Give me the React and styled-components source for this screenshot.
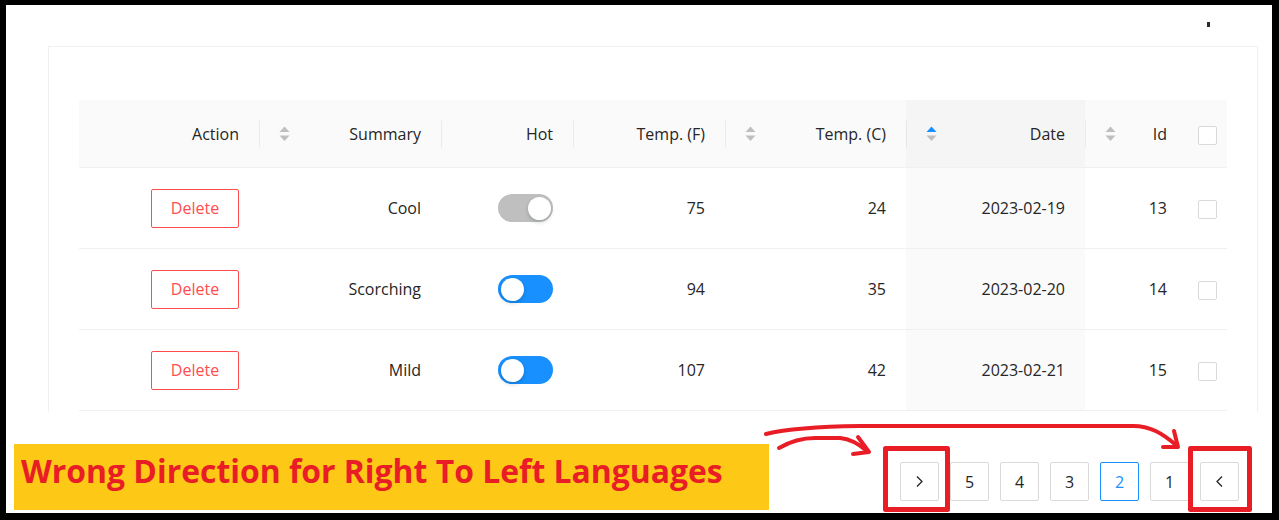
import React from 'react';
import styled, {createGlobalStyle} from 'styled-components';

const GlobalStyle = createGlobalStyle`
  html, body {
    margin: 0;
    padding: 0;
    background: #000;
  }
  body {
    font-family: "Open Sans", "Noto Sans", sans-serif;
    color: #262626;
  }
  * {
    box-sizing: border-box;
  }
`;

const Page = styled.div`
  position: relative;
  width: 1279px;
  height: 520px;
  padding: 5px 7px 7px 6px;
  background: #000;
`;

const Screen = styled.div`
  height: 100%;
  background: #fff;
  display: flex;
  flex-direction: column;
  overflow: hidden;
`;

const TopBar = styled.div`
  height: 41px;
  flex: none;
  display: flex;
  justify-content: flex-end;
  padding: 17px 62px 0 0;
`;

const Tick = styled.span`
  width: 3px;
  height: 5px;
  background: #2b2b2b;
`;

const Card = styled.div`
  flex: none;
  margin-left: 42px;
  width: 1210px;
  border: 1px solid #f0f0f0;
  border-bottom: none;
  padding: 53px 30px 1px 30px;
`;

const Table = styled.table`
  width: 1148px;
  direction: rtl;
  table-layout: fixed;
  border-collapse: separate;
  border-spacing: 0;
  font-size: 16px;
`;

const Th = styled.th`
  position: relative;
  height: 68px;
  padding: ${p => (p.$center ? '0' : '0 20px')};
  background: ${p => (p.$sorted ? '#f5f5f5' : '#fafafa')};
  border-bottom: 1px solid #f0f0f0;
  font-weight: 400;
  color: #262626;
  text-align: ${p => (p.$center ? 'center' : 'right')};
  vertical-align: middle;

  ${p =>
    p.$sep &&
    `
    &::before {
      content: '';
      position: absolute;
      left: 0;
      top: 50%;
      width: 1px;
      height: 27px;
      transform: translateY(-50%);
      background: rgba(0, 0, 0, 0.06);
    }
  `}
`;

const Td = styled.td`
  height: 81px;
  padding: ${p => (p.$center ? '0' : '0 20px')};
  background: ${p => (p.$sorted ? '#fafafa' : '#fff')};
  border-bottom: 1px solid #f0f0f0;
  text-align: ${p => (p.$center ? 'center' : 'right')};
  vertical-align: middle;
  color: #262626;
  line-height: 1.5;
`;

const HeadInner = styled.div`
  display: flex;
  align-items: center;
`;

const HeadTitle = styled.span`
  flex: 1;
  text-align: right;
`;

const SorterIcon = styled.svg`
  display: block;
  width: 11px;
  height: 16px;
`;

const Checkbox = styled.span`
  display: inline-block;
  width: 19px;
  height: 19px;
  border: 1px solid #d9d9d9;
  border-radius: 2px;
  background: #fff;
  vertical-align: middle;
`;

const SwitchTrack = styled.span`
  position: relative;
  display: inline-block;
  width: 55px;
  height: 28px;
  border-radius: 14px;
  background: ${p => (p.$on ? '#1890ff' : '#bfbfbf')};
  vertical-align: middle;
`;

const SwitchHandle = styled.span`
  position: absolute;
  top: 2.5px;
  ${p => (p.$on ? 'left: 2.5px;' : 'right: 2.5px;')}
  width: 23px;
  height: 23px;
  border-radius: 50%;
  background: #fff;
  box-shadow: 0 2px 4px rgba(0, 35, 11, 0.2);
`;

const DeleteButton = styled.button`
  width: 88px;
  height: 39px;
  padding: 0;
  border: 1px solid #ff4d4f;
  border-radius: 2px;
  background: #fff;
  color: #ff4d4f;
  font-family: inherit;
  font-size: 16px;
  vertical-align: middle;
`;

const Footer = styled.div`
  flex: 1;
  display: flex;
  align-items: flex-start;
`;

const Banner = styled.div`
  margin: 32px 0 0 8px;
  width: 755px;
  height: 66px;
  padding: 5px 0 0 7px;
  background: #fec817;
  color: #e81d25;
  font-family: "Open Sans", "Noto Sans", sans-serif;
  font-weight: 700;
  font-size: 31.9px;
  line-height: 44px;
  white-space: nowrap;
`;

const Pagination = styled.ul`
  margin: 50px 33px 0 auto;
  padding: 0;
  list-style: none;
  display: flex;
  direction: rtl;
  gap: 11px;
`;

const PageItem = styled.li`
  width: 39px;
  height: 39px;
  display: flex;
  align-items: center;
  justify-content: center;
  border: 1px solid ${p => (p.$active ? '#1890ff' : '#d9d9d9')};
  border-radius: 2px;
  background: #fff;
  color: ${p => (p.$active ? '#1890ff' : '#262626')};
  font-size: 16px;
`;

const Chevron = styled.svg`
  width: 9px;
  height: 13px;
`;

const Annotations = styled.svg`
  position: absolute;
  top: 0;
  left: 0;
  width: 1279px;
  height: 520px;
  pointer-events: none;
`;

const rows = [
  {id: 13, date: '2023-02-19', c: 24, f: 75, hot: false, summary: 'Cool'},
  {id: 14, date: '2023-02-20', c: 35, f: 94, hot: true, summary: 'Scorching'},
  {id: 15, date: '2023-02-21', c: 42, f: 107, hot: true, summary: 'Mild'},
];

const Sorter = ({up}) => (
  <SorterIcon viewBox="0 0 11 16">
    <polygon points="0.5,6 5.5,0.5 10.5,6" fill={up ? '#1890ff' : '#bfbfbf'} />
    <polygon points="0.5,9.5 5.5,15 10.5,9.5" fill="#bfbfbf" />
  </SorterIcon>
);

const HeadCell = ({title, sorter, up, ...rest}) => (
  <Th {...rest}>
    {sorter ? (
      <HeadInner>
        <HeadTitle>{title}</HeadTitle>
        <Sorter up={up} />
      </HeadInner>
    ) : (
      title
    )}
  </Th>
);

const Switch = ({on}) => (
  <SwitchTrack $on={on}>
    <SwitchHandle $on={on} />
  </SwitchTrack>
);

const ChevronIcon = ({dir}) => (
  <Chevron viewBox="0 0 9 13">
    <polyline
      points={dir === 'right' ? '2,1.5 7,6.5 2,11.5' : '7,1.5 2,6.5 7,11.5'}
      fill="none"
      stroke="#262626"
      strokeWidth="1.3"
    />
  </Chevron>
);

const App = () => {
  return (
    <Page>
      <GlobalStyle />
      <Screen>
        <TopBar>
          <Tick />
        </TopBar>
        <Card>
          <Table>
            <colgroup>
              <col style={{width: 40}} />
              <col style={{width: 102}} />
              <col style={{width: 179}} />
              <col style={{width: 181}} />
              <col style={{width: 152}} />
              <col style={{width: 132}} />
              <col style={{width: 182}} />
              <col style={{width: 180}} />
            </colgroup>
            <thead>
              <tr>
                <Th $center>
                  <Checkbox />
                </Th>
                <HeadCell title="Id" sorter $sep />
                <HeadCell title="Date" sorter up $sorted $sep />
                <HeadCell title="Temp. (C)" sorter $sep />
                <HeadCell title="Temp. (F)" $sep />
                <HeadCell title="Hot" $sep />
                <HeadCell title="Summary" sorter $sep />
                <HeadCell title="Action" />
              </tr>
            </thead>
            <tbody>
              {rows.map(r => (
                <tr key={r.id}>
                  <Td $center>
                    <Checkbox />
                  </Td>
                  <Td>{r.id}</Td>
                  <Td $sorted>{r.date}</Td>
                  <Td>{r.c}</Td>
                  <Td>{r.f}</Td>
                  <Td>
                    <Switch on={r.hot} />
                  </Td>
                  <Td>{r.summary}</Td>
                  <Td>
                    <DeleteButton>Delete</DeleteButton>
                  </Td>
                </tr>
              ))}
            </tbody>
          </Table>
        </Card>
        <Footer>
          <Banner>Wrong Direction for Right To Left Languages</Banner>
          <Pagination>
            <PageItem>
              <ChevronIcon dir="left" />
            </PageItem>
            {[1, 2, 3, 4, 5].map(n => (
              <PageItem key={n} $active={n === 2}>
                {n}
              </PageItem>
            ))}
            <PageItem>
              <ChevronIcon dir="right" />
            </PageItem>
          </Pagination>
        </Footer>
      </Screen>
      <Annotations viewBox="0 0 1279 520">
        <g fill="none" stroke="#e81d25" strokeLinecap="round" strokeLinejoin="round">
          <rect x="885.5" y="448.5" width="62" height="61" strokeWidth="5" strokeLinecap="butt" />
          <rect x="1190.5" y="448.5" width="59" height="61" strokeWidth="5" strokeLinecap="butt" />
          <path d="M766,434 C790,428 820,426.5 860,426 L1133,426 C1150,426 1162,433 1176,445" strokeWidth="4" />
          <path d="M1174,431 L1178,447 L1163,447" strokeWidth="4" />
          <path d="M779,448 C791,441 801,438 815,438 L840,438 C851,439 859,444 867,451" strokeWidth="4" />
          <path d="M858,437 L869,452 L853,454" strokeWidth="4" />
        </g>
      </Annotations>
    </Page>
  );
};

export default App;
